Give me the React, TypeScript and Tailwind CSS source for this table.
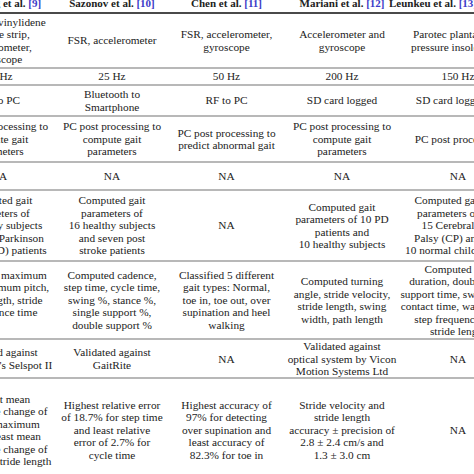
type Cell = string[];

const headers: [string, string][] = [
  ["Bamberg et al. ", "[9]"],
  ["Sazonov et al. ", "[10]"],
  ["Chen et al. ", "[11]"],
  ["Mariani et al. ", "[12]"],
  ["Leunkeu et al. ", "[13]"],
];

// each row: height (px, incl. bottom rule) and five cells of pre-broken lines
const rows: { h: string; cells: Cell[]; last?: boolean; nudge?: string }[] = [
  {
    h: "h-[55px]",
    nudge: "pr-[22px]",
    cells: [
      ["FSR, polyvinylidene", "fluoride strip,", "accelerometer,", "gyroscope"],
      ["FSR, accelerometer"],
      ["FSR, accelerometer,", "gyroscope"],
      ["Accelerometer and", "gyroscope"],
      ["Parotec plantar", "pressure insoles"],
    ],
  },
  {
    h: "h-[17px]",
    cells: [["75 Hz"], ["25 Hz"], ["50 Hz"], ["200 Hz"], ["150 Hz"]],
  },
  {
    h: "h-[31px]",
    nudge: "pr-[14px]",
    cells: [
      ["RF to PC"],
      ["Bluetooth to", "Smartphone"],
      ["RF to PC"],
      ["SD card logged"],
      ["SD card logged"],
    ],
  },
  {
    h: "h-[46px]",
    cells: [
      ["PC post processing to", "compute gait", "parameters"],
      ["PC post processing to", "compute gait", "parameters"],
      ["PC post processing to", "predict abnormal gait"],
      ["PC post processing to", "compute gait", "parameters"],
      ["PC post processing"],
    ],
  },
  {
    h: "h-[28px]",
    cells: [["NA"], ["NA"], ["NA"], ["NA"], ["NA"]],
  },
  {
    h: "h-[71px]",
    nudge: "pr-[20px]",
    cells: [
      ["Computed gait", "parameters of", "10 healthy subjects", "and eight Parkinson", "disease (PD) patients"],
      ["Computed gait", "parameters of", "16 healthy subjects", "and seven post", "stroke patients"],
      ["NA"],
      ["Computed gait", "parameters of 10 PD", "patients and", "10 healthy subjects"],
      ["Computed gait", "parameters of", "15 Cerebral", "Palsy (CP) and", "10 normal children"],
    ],
  },
  {
    h: "h-[78px]",
    cells: [
      ["Computed maximum", "pitch, minimum pitch,", "stride length, stride", "time, stance time"],
      ["Computed cadence,", "step time, cycle time,", "swing %, stance %,", "single support %,", "double support %"],
      ["Classified 5 different", "gait types: Normal,", "toe in, toe out, over", "supination and heel", "walking"],
      ["Computed turning", "angle, stride velocity,", "stride length, swing", "width, path length"],
      ["Computed gait", "duration, double limb", "support time, swing time,", "contact time, walk speed,", "step frequency, and", "stride length"],
    ],
  },
  {
    h: "h-[39px]",
    cells: [
      ["Validated against", "MGH BML's Selspot II"],
      ["Validated against", "GaitRite"],
      ["NA"],
      ["Validated against", "optical system by Vicon", "Motion Systems Ltd"],
      ["NA"],
    ],
  },
  {
    h: "h-[102px]",
    last: true,
    cells: [
      ["Highest mean", "pitch angle change of", "and the maximum", "and the least mean", "pitch angle change of", "maximum stride length"],
      ["Highest relative error", "of 18.7% for step time", "and least relative", "error of 2.7% for", "cycle time"],
      ["Highest accuracy of", "97% for detecting", "over supination and", "least accuracy of", "82.3% for toe in"],
      ["Stride velocity and", "stride length", "accuracy \u00b1 precision of", "2.8 \u00b1 2.4 cm/s and", "1.3 \u00b1 3.0 cm"],
      ["NA"],
    ],
  },
];

const cols = "grid grid-cols-[112px_114px_115px_116px_116px]";
const cellBase =
  "flex flex-col items-center justify-center text-center text-[11.3px] leading-[12.5px]";

export default function App() {
  return (
    <div className="w-[474px] h-[474px] overflow-hidden bg-white text-[#222] font-['Liberation_Serif',serif]">
      <div className="-ml-[57px] -mt-[5px] w-[573px]">
        {/* Header */}
        <div className={`${cols} h-[19px] border-b-2 border-[#4a4a4a]`}>
          {headers.map(([name, ref], i) => (
            <div
              key={i}
              className={
                i === 4
                  ? "flex items-center justify-start whitespace-nowrap text-[11px] font-bold"
                  : "flex items-center justify-center whitespace-nowrap text-[11px] font-bold"
              }
            >
              <span className={i === 4 ? "-ml-[11px]" : ""}>
                {name}
                <span className="text-[#3c3cc8]">{ref}</span>
              </span>
            </div>
          ))}
        </div>

        {/* Body */}
        {rows.map((row, r) => (
          <div
            key={r}
            className={`${cols} ${row.h} ${row.last ? "" : "border-b-2 border-[#b8b8b8]"}`}
          >
            {row.cells.map((lines, c) => {
              let extra = "";
              if (r === 6 && c === 0) extra = "pb-[13px]";
              if (c === 4 && row.nudge) extra = row.nudge;
              return (
                <div key={c} className={`${cellBase} ${extra}`}>
                  {lines.map((l, k) => (
                    <span key={k} className="block whitespace-nowrap">
                      {l}
                    </span>
                  ))}
                </div>
              );
            })}
          </div>
        ))}
      </div>
    </div>
  );
}
